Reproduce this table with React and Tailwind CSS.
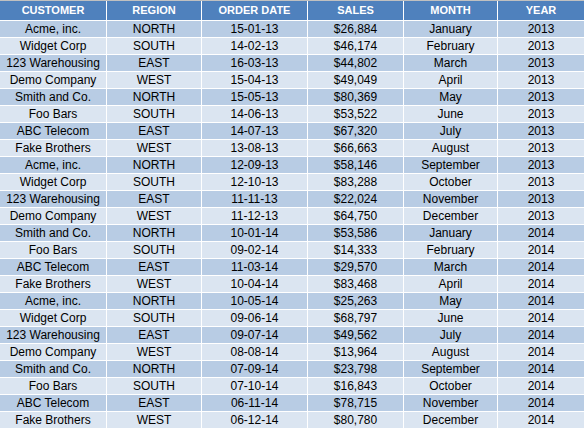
const rows = [
  ['Acme, inc.', 'NORTH', '15-01-13', '$26,884', 'January', '2013'],
  ['Widget Corp', 'SOUTH', '14-02-13', '$46,174', 'February', '2013'],
  ['123 Warehousing', 'EAST', '16-03-13', '$44,802', 'March', '2013'],
  ['Demo Company', 'WEST', '15-04-13', '$49,049', 'April', '2013'],
  ['Smith and Co.', 'NORTH', '15-05-13', '$80,369', 'May', '2013'],
  ['Foo Bars', 'SOUTH', '14-06-13', '$53,522', 'June', '2013'],
  ['ABC Telecom', 'EAST', '14-07-13', '$67,320', 'July', '2013'],
  ['Fake Brothers', 'WEST', '13-08-13', '$66,663', 'August', '2013'],
  ['Acme, inc.', 'NORTH', '12-09-13', '$58,146', 'September', '2013'],
  ['Widget Corp', 'SOUTH', '12-10-13', '$83,288', 'October', '2013'],
  ['123 Warehousing', 'EAST', '11-11-13', '$22,024', 'November', '2013'],
  ['Demo Company', 'WEST', '11-12-13', '$64,750', 'December', '2013'],
  ['Smith and Co.', 'NORTH', '10-01-14', '$53,586', 'January', '2014'],
  ['Foo Bars', 'SOUTH', '09-02-14', '$14,333', 'February', '2014'],
  ['ABC Telecom', 'EAST', '11-03-14', '$29,570', 'March', '2014'],
  ['Fake Brothers', 'WEST', '10-04-14', '$83,468', 'April', '2014'],
  ['Acme, inc.', 'NORTH', '10-05-14', '$25,263', 'May', '2014'],
  ['Widget Corp', 'SOUTH', '09-06-14', '$68,797', 'June', '2014'],
  ['123 Warehousing', 'EAST', '09-07-14', '$49,562', 'July', '2014'],
  ['Demo Company', 'WEST', '08-08-14', '$13,964', 'August', '2014'],
  ['Smith and Co.', 'NORTH', '07-09-14', '$23,798', 'September', '2014'],
  ['Foo Bars', 'SOUTH', '07-10-14', '$16,843', 'October', '2014'],
  ['ABC Telecom', 'EAST', '06-11-14', '$78,715', 'November', '2014'],
  ['Fake Brothers', 'WEST', '06-12-14', '$80,780', 'December', '2014'],
];

const headers = ['CUSTOMER', 'REGION', 'ORDER DATE', 'SALES', 'MONTH', 'YEAR'];

// widths include the 1px white right border
const cols = 'grid grid-cols-[107px_95px_106px_96px_94px_1fr]';

export default function App() {
  return (
    <div className="w-[584px] h-[430px] overflow-hidden bg-white border-t border-[#c0c0c0] font-['Liberation_Sans',Arial,sans-serif]">
      <div className={`${cols} h-[20px] bg-[#4f81bd] border-b border-white`}>
        {headers.map((h) => (
          <div key={h} className="flex items-center justify-center border-r border-white last:border-r-0 text-[11px] font-bold text-white leading-none">
            {h}
          </div>
        ))}
      </div>
      {rows.map((r, i) => (
        <div
          key={i}
          className={`${cols} h-[17px] border-b border-white ${i % 2 === 0 ? 'bg-[#b8cce4]' : 'bg-[#dbe5f1]'}`}
        >
          {r.map((c, j) => (
            <div key={j} className="flex items-center justify-center border-r border-white last:border-r-0 text-[12px] text-black leading-none whitespace-nowrap">
              {c}
            </div>
          ))}
        </div>
      ))}
    </div>
  );
}
